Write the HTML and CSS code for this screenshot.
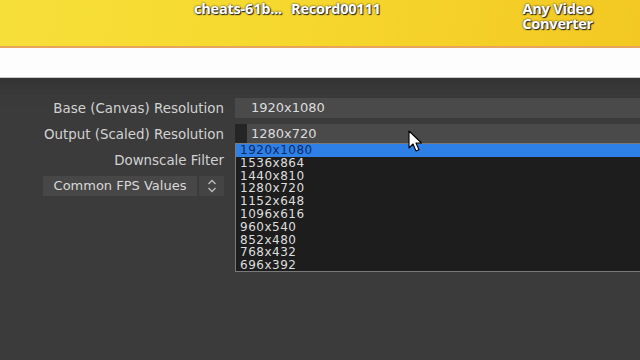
FILE: index.html
```html
<!DOCTYPE html>
<html lang="en">
<head>
  <meta charset="UTF-8">
  <meta name="viewport" content="width=device-width, initial-scale=1.0">
  <title>Video settings</title>
  <link rel="stylesheet" href="styles.css">
</head>
<body>
  <div class="taskbar">
    <div class="desk-names">
      <span class="desk-label">cheats-61b...</span>
      <span class="desk-label">Record00111</span>
    </div>
    <div class="desk-label desk-app">Any Video<br>Converter</div>
  </div>
  <div class="white-band"></div>

  <div class="panel">
    <div class="settings">
      <div class="row">
        <div class="label">Base (Canvas) Resolution</div>
        <div class="field">1920x1080</div>
      </div>
      <div class="row">
        <div class="label">Output (Scaled) Resolution</div>
        <div class="field field-combo"><span class="combo-edge"></span>1280x720</div>
      </div>
      <div class="row">
        <div class="label">Downscale Filter</div>
        <div class="field field-empty"></div>
      </div>
      <div class="row">
        <div class="fps-group">
          <div class="fps-box">Common FPS Values</div>
          <div class="spin">
            <svg width="10" height="14" viewBox="0 0 10 14">
              <path d="M1.5 5 L5 1.5 L8.5 5" fill="none" stroke="#bdbdbd" stroke-width="1.3"/>
              <path d="M1.5 9 L5 12.5 L8.5 9" fill="none" stroke="#bdbdbd" stroke-width="1.3"/>
            </svg>
          </div>
        </div>
        <div class="field field-empty"></div>
      </div>
    </div>

    <ul class="dropdown">
      <li class="selected">1920x1080</li>
      <li>1536x864</li>
      <li>1440x810</li>
      <li>1280x720</li>
      <li>1152x648</li>
      <li>1096x616</li>
      <li>960x540</li>
      <li>852x480</li>
      <li>768x432</li>
      <li>696x392</li>
    </ul>

    <svg class="cursor" width="18" height="24" viewBox="0 0 18 24">
      <path d="M1 1 L1 18 L5 14 L8 21 L11 19.8 L8 13 L13.5 13 Z" fill="#fff" stroke="#000" stroke-width="1.1" stroke-linejoin="round"/>
    </svg>
  </div>
</body>
</html>
```

FILE: styles.css
```css
body {
  margin: 0;
  width: 640px;
  height: 360px;
  overflow: hidden;
  background-color: #3b3b3b;
  font-family: "DejaVu Sans", Verdana, sans-serif;
}
.taskbar {
  height: 46px;
  display: flex;
  align-items: flex-start;
  background: linear-gradient(100deg, #f7df3a 0%, #f6d92e 40%, #f3c823 100%);
  border-bottom: 2px solid #e9a45c;
  overflow: hidden;
}
.desk-names {
  display: flex;
  gap: 9px;
  margin-left: 194px;
  margin-top: 1px;
}
.desk-label {
  color: #fff;
  font-family: "Open Sans", "DejaVu Sans", sans-serif;
  font-weight: bold;
  font-size: 14.5px;
  line-height: 16px;
  letter-spacing: -0.2px;
  text-shadow: 0 0 2px #222, 1px 1px 1px #222;
}
.desk-app {
  margin-left: auto;
  margin-right: 47px;
  margin-top: 1px;
  text-align: center;
  line-height: 15px;
}
.white-band {
  height: 29px;
  background-color: #fdfdfd;
  border-bottom: 1px solid #c9c9c9;
}
.panel {
  position: relative;
  height: 283px;
  background: linear-gradient(#333333 0px, #393939 14px, #3b3b3b 30px);
}
.settings {
  padding-top: 20px;
  display: flex;
  flex-direction: column;
  gap: 6px;
}
.row {
  display: grid;
  grid-template-columns: 224px 1fr;
  column-gap: 11px;
  height: 20px;
  align-items: center;
}
.label {
  text-align: right;
  color: #d2d2d2;
  font-size: 13.4px;
}
.field {
  height: 20px;
  line-height: 20px;
  background-color: #4a4a4a;
  color: #dcdcdc;
  font-size: 13px;
  padding-left: 16px;
}
.field-combo {
  display: flex;
  padding-left: 0;
  gap: 4px;
}
.combo-edge {
  width: 12px;
  height: 20px;
  background-color: #252525;
}
.field-empty {
  background-color: transparent;
}
.fps-group {
  display: flex;
  gap: 2px;
  margin-left: 43px;
}
.fps-box {
  width: 154px;
  height: 20px;
  line-height: 20px;
  background-color: #474747;
  color: #d8d8d8;
  font-size: 13px;
  text-align: center;
}
.spin {
  width: 25px;
  height: 20px;
  background-color: #444;
  display: flex;
  align-items: center;
  justify-content: center;
}
.dropdown {
  position: absolute;
  left: 235px;
  top: 65px;
  width: 410px;
  margin: 0;
  padding: 0;
  list-style: none;
  background-color: #1d1d1d;
  border: 1px solid #7a7a7a;
  border-right: none;
  height: 127px;
}
.dropdown li {
  height: 12.8px;
  line-height: 12.8px;
  padding-left: 4px;
  color: #dedede;
  font-size: 12px;
  letter-spacing: 0.5px;
}
.dropdown .selected {
  background-color: #2f80e6;
  color: #0b2a66;
}
.cursor {
  position: absolute;
  left: 408px;
  top: 52px;
}
```
